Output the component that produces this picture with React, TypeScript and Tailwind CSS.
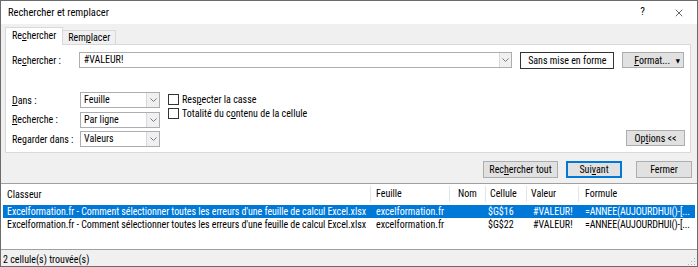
import { X } from 'lucide-react'

const font = "font-['Roboto_Condensed','DejaVu_Sans_Condensed',sans-serif]"

function Chevron() {
    return (
        <svg width="7" height="4" viewBox="0 0 7 4">
            <polyline points="0.5,0.5 3.5,3.5 6.5,0.5" fill="none" stroke="#7a7a7a" strokeWidth="1" />
        </svg>
    )
}

function Select({ value }: { value: string }) {
    return (
        <div className="flex h-[16px] w-[80px] border border-[#abadb3] bg-white">
            <span className="flex-1 pl-[3px] leading-[14px]">{value}</span>
            <span className="flex w-[13px] items-center justify-center border-l border-[#d9d9d9] bg-[#f0f0f0]">
                <Chevron />
            </span>
        </div>
    )
}

function Check({ children }: { children: React.ReactNode }) {
    return (
        <div className="flex h-[13px] items-center gap-[3px]">
            <span className="h-[11px] w-[11px] border border-[#333333] bg-white" />
            <span className="leading-[13px]">{children}</span>
        </div>
    )
}

const rows = [
    { sel: true, cell: '$G$16' },
    { sel: false, cell: '$G$22' },
]

export default function App() {
    return (
        <div className={`flex h-[267px] w-[698px] flex-col overflow-hidden whitespace-nowrap border border-[#6b6b6b] bg-[#f0f0f0] text-[10px] text-black ${font}`}>

            {/* Title bar */}
            <div className="flex h-[23px] shrink-0 items-center bg-white pl-[7px]">
                <span className="flex-1 text-[10.5px]">Rechercher et remplacer</span>
                <span className="mr-[28px] text-[11px]">?</span>
                <X className="mr-[12px] h-[12px] w-[12px]" strokeWidth={1.2} />
            </div>

            {/* Tabs */}
            <div className="ml-[4px] mt-[3px] flex items-end">
                <div className="relative z-10 -mb-px h-[18px] border border-b-0 border-[#d9d9d9] bg-white px-[6px] leading-[16px]">
                    Re<u>c</u>hercher
                </div>
                <div className="h-[14px] border border-b-0 border-l-0 border-[#d9d9d9] bg-[#f0f0f0] px-[5px] leading-[13px]">
                    Rem<u>p</u>lacer
                </div>
            </div>

            {/* Tab panel */}
            <div className="ml-[4px] mr-[6px] flex h-[109px] shrink-0 flex-col border border-[#d9d9d9] bg-white px-[6px] pt-[7px]">
                <div className="flex h-[16px] items-center">
                    <span className="w-[67px]">Re<u>c</u>hercher :</span>
                    <div className="flex h-[16px] w-[435px] border border-[#abadb3]">
                        <span className="flex-1 pl-[4px] leading-[14px]">#VALEUR!</span>
                        <span className="flex w-[12px] items-center justify-center border-l border-[#d9d9d9] bg-[#f0f0f0]">
                            <Chevron />
                        </span>
                    </div>
                    <div className="ml-[8px] flex h-[17px] w-[94px] items-center justify-center border border-[#333333] bg-[#fdfdfd]">
                        Sans mise en forme
                    </div>
                    <div className="ml-[8px] flex h-[16px] w-[62px] items-center border border-[#adadad] bg-[#e1e1e1] pl-[11px]">
                        <span className="flex-1">
                            <u>F</u>ormat...
                        </span>
                        <span className="mr-[3px] text-[6px]">▼</span>
                    </div>
                </div>

                <div className="mt-[24px] flex items-end">
                    <div className="flex flex-col gap-[3.5px]">
                        <div className="flex items-center">
                            <span className="w-[68px]"><u>D</u>ans :</span>
                            <Select value="Feuille" />
                        </div>
                        <div className="flex items-center">
                            <span className="w-[68px]"><u>R</u>echerche :</span>
                            <Select value="Par ligne" />
                        </div>
                        <div className="flex items-center">
                            <span className="w-[68px]">Re<u>g</u>arder dans :</span>
                            <Select value="Valeurs" />
                        </div>
                    </div>
                    <div className="ml-[8px] flex flex-col gap-[1px] self-start pt-[1px]">
                        <Check>Res<u>p</u>ecter la casse</Check>
                        <Check>Totalité du c<u>o</u>ntenu de la cellule</Check>
                    </div>
                    <div className="flex-1" />
                    <div className="mb-[1px] mr-[-1px] flex h-[16px] w-[59px] items-center justify-center border border-[#adadad] bg-[#e1e1e1]">
                        Op<u>t</u>ions &lt;&lt;
                    </div>
                </div>
            </div>

            {/* Action buttons */}
            <div className="mr-[5px] mt-[8px] flex justify-end">
                <div className="flex h-[17px] w-[75px] items-center justify-center border border-[#adadad] bg-[#e1e1e1]">
                    Rec<u>h</u>ercher tout
                </div>
                <div className="ml-[8px] flex h-[17px] w-[56px] items-center justify-center border-2 border-[#0078d7] bg-[#e1e1e1]">
                    Sui<u>v</u>ant
                </div>
                <div className="ml-[14px] flex h-[17px] w-[56px] items-center justify-center border border-[#adadad] bg-[#e1e1e1]">
                    Fermer
                </div>
            </div>

            {/* Results list */}
            <div className="mt-[5px] flex h-[67px] shrink-0 flex-col border-y border-[#a0a0a0] bg-white">
                <div className="grid h-[20px] grid-cols-[369px_79px_36px_41px_52px_1fr] items-center">
                    <span className="pl-[6px]">Classeur</span>
                    <span className="border-l border-[#e5e5e5] pl-[5px] leading-[16px]">Feuille</span>
                    <span className="border-l border-[#e5e5e5] pl-[8px] leading-[16px]">Nom</span>
                    <span className="border-l border-[#e5e5e5] pl-[4px] leading-[16px]">Cellule</span>
                    <span className="border-l border-[#e5e5e5] pl-[4px] leading-[16px]">Valeur</span>
                    <span className="border-l border-[#e5e5e5] pl-[6px] leading-[16px]">Formule</span>
                </div>
                <div className="mt-[1px] flex flex-col">
                    {rows.map((r, i) => (
                        <div
                            key={i}
                            className={`mx-[2px] grid h-[13px] grid-cols-[367px_79px_36px_41px_52px_1fr] items-center leading-[13px] ${r.sel ? 'bg-[#0078d7] text-white' : ''}`}
                        >
                            <span className="overflow-hidden pl-[4px] tracking-[-0.06px]">
                                Excelformation.fr - Comment sélectionner toutes les erreurs d'une feuille de calcul Excel.xlsx
                            </span>
                            <span className="pl-[6px]">excelformation.fr</span>
                            <span />
                            <span className="pl-[3px]">{r.cell}</span>
                            <span className="pl-[7px]">#VALEUR!</span>
                            <span className="overflow-hidden pl-[7px] tracking-[-0.15px]">=ANNEE(AUJOURDHUI()-[...</span>
                        </div>
                    ))}
                </div>
            </div>

            {/* Status bar */}
            <div className="flex flex-1 items-center pl-[2px] pt-[2px]">
                <span className="flex-1">2 cellule(s) trouvée(s)</span>
                <svg width="8" height="8" viewBox="0 0 8 8" className="mb-[-4px] mr-[1px]">
                    <rect x="6" y="0" width="1" height="1" fill="#b0b0b0" />
                    <rect x="3" y="3" width="1" height="1" fill="#b0b0b0" />
                    <rect x="6" y="3" width="1" height="1" fill="#b0b0b0" />
                    <rect x="0" y="6" width="1" height="1" fill="#b0b0b0" />
                    <rect x="3" y="6" width="1" height="1" fill="#b0b0b0" />
                    <rect x="6" y="6" width="1" height="1" fill="#b0b0b0" />
                </svg>
            </div>
        </div>
    )
}
